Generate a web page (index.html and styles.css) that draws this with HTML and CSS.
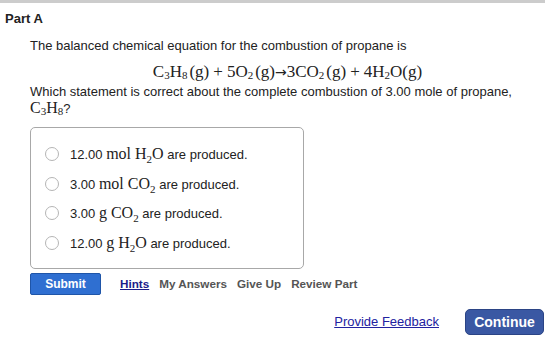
FILE: index.html
```html
<!DOCTYPE html>
<html>
<head>
<meta charset="utf-8">
<link rel="stylesheet" href="styles.css">
</head>
<body>
<div class="topbar"></div>
<h2 class="part">Part A</h2>
<div class="content">
  <p class="intro">The balanced chemical equation for the combustion of propane is</p>
  <div class="equation"><span class="m">C<sub>3</sub>H<sub>8</sub><span class="g">(g)</span><span class="op">+</span>5O<sub>2</sub><span class="g">(g)</span><span class="arrow">→</span>3CO<sub>2</sub><span class="g">(g)</span><span class="op">+</span>4H<sub>2</sub>O(g)</span></div>
  <p class="question">Which statement is correct about the complete combustion of 3.00 mole of propane,<br><span class="m">C<sub>3</sub>H<sub>8</sub></span>?</p>
  <div class="choices">
    <label class="choice"><span class="radio"></span><span>12.00 <span class="m">mol H<sub class="lo">2</sub>O</span> are produced.</span></label>
    <label class="choice"><span class="radio"></span><span>3.00 <span class="m">mol CO<sub class="lo">2</sub></span> are produced.</span></label>
    <label class="choice"><span class="radio"></span><span>3.00 <span class="m">g CO<sub class="lo">2</sub></span> are produced.</span></label>
    <label class="choice"><span class="radio"></span><span>12.00 <span class="m">g H<sub class="lo">2</sub>O</span> are produced.</span></label>
  </div>
  <div class="actions">
    <button class="submit">Submit</button>
    <a class="hints">Hints</a>
    <span class="act">My Answers</span>
    <span class="act">Give Up</span>
    <span class="act">Review Part</span>
  </div>
</div>
<div class="footer">
  <a class="feedback">Provide Feedback</a>
  <button class="continue">Continue</button>
</div>
</body>
</html>
```

FILE: styles.css
```css
html, body {
  margin: 0;
  padding: 0;
  background: #fff;
}
body {
  width: 559px;
  height: 361px;
  font-family: "Liberation Sans", Arial, sans-serif;
  font-size: 13px;
  color: #222;
  overflow: hidden;
}
.topbar {
  width: 545px;
  height: 3px;
  background: #cccccc;
}
.part {
  margin: 8px 0 0 5px;
  font-size: 13px;
  font-weight: bold;
  line-height: 15px;
  color: #222;
}
.content {
  padding-left: 30px;
}
.intro {
  margin: 12px 0 0 0;
  line-height: 15px;
}
.m {
  font-family: "Liberation Serif", "Times New Roman", serif;
  font-size: 16px;
}
.m sub {
  font-size: 11px;
  vertical-align: -2px;
  line-height: 0;
}
.m sub.lo {
  vertical-align: -4px;
}
.equation {
  width: 515px;
  text-align: center;
  margin-top: 7px;
  line-height: 23px;
}
.equation .m {
  font-size: 17px;
}
.equation .g {
  margin-left: 2px;
}
.equation .op {
  margin: 0 4px;
}
.arrow {
  font-family: "DejaVu Sans", sans-serif;
  font-size: 14px;
}
.question {
  margin: 0;
  line-height: 16px;
}
.choices {
  margin-top: 10px;
  width: 272px;
  border: 1px solid #a8a8a8;
  border-radius: 5px;
  padding: 11px 0 10px 0;
  display: flex;
  flex-direction: column;
}
.choice {
  display: flex;
  align-items: center;
  height: 29.7px;
  padding-left: 14px;
  gap: 11px;
}
.radio {
  width: 14px;
  height: 14px;
  border: 1px solid #b5b5b5;
  border-radius: 50%;
  box-sizing: border-box;
  background: #fff;
  flex: none;
}
.actions {
  display: flex;
  align-items: center;
  margin-top: 4px;
  gap: 10px;
}
.submit {
  width: 71px;
  height: 22px;
  background: #2f6fd1;
  border: 1px solid #1f55a8;
  border-radius: 2px;
  color: #fff;
  font-family: "Liberation Sans", Arial, sans-serif;
  font-weight: bold;
  font-size: 12px;
  padding: 0;
  margin-right: 9px;
}
.hints {
  color: #1b1b8a;
  text-decoration: underline;
  font-weight: bold;
  font-size: 11.7px;
}
.act {
  color: #555;
  font-weight: bold;
  font-size: 11.7px;
}
.footer {
  display: flex;
  align-items: center;
  justify-content: flex-end;
  width: 544px;
  margin-top: 14px;
  gap: 26px;
}
.feedback {
  color: #2222a0;
  text-decoration: underline;
  font-size: 13px;
}
.continue {
  width: 79px;
  height: 26px;
  background: #3a58a3;
  border: 1px solid #2b4485;
  border-radius: 5px;
  color: #fff;
  font-family: "Liberation Sans", Arial, sans-serif;
  font-weight: bold;
  font-size: 14px;
  padding: 0;
}
```
